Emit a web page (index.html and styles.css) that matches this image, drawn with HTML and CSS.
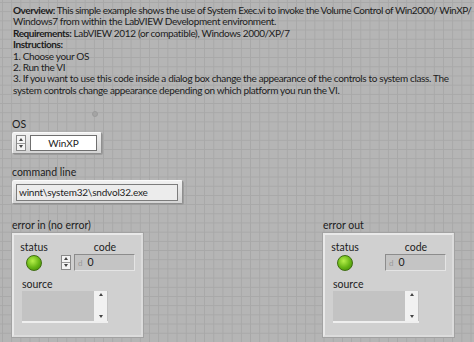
FILE: index.html
```html
<!DOCTYPE html>
<html lang="en">
<head>
  <meta charset="UTF-8" />
  <title>System Exec - Volume Control</title>
  <link rel="stylesheet" href="styles.css">
</head>
<body>
  <div class="panel">
    <p class="intro">
      <span class="tight"><b>Overview:</b> This simple example shows the use of System Exec.vi to invoke the Volume Control of Win2000/ WinXP/</span><br>
      Windows7 from within the LabVIEW Development environment.<br>
      <b>Requirements:</b> LabVIEW 2012 (or compatible), Windows 2000/XP/7<br>
      <b>Instructions:</b><br>
      1. Choose your OS<br>
      2. Run the VI<br>
      3. If you want to use this code inside a dialog box change the appearance of the controls to system class. The<br>
      system controls change appearance depending on which platform you run the VI.
    </p>
    <span class="knob"></span>

    <div class="ctl os">
      <div class="label">OS</div>
      <div class="frame os-frame">
        <div class="spin">
          <span class="up"></span>
          <span class="down"></span>
        </div>
        <div class="display">WinXP</div>
      </div>
    </div>

    <div class="ctl cmd">
      <div class="label">command line</div>
      <div class="frame cmd-frame">
        <div class="field">winnt\system32\sndvol32.exe</div>
      </div>
    </div>

    <div class="errors">
      <div class="ctl">
        <div class="label">error in (no error)</div>
        <div class="cluster">
          <div class="top-row">
            <div class="status">
              <div class="sub">status</div>
              <span class="led"></span>
            </div>
            <div class="code">
              <div class="sub code-label">code</div>
              <div class="code-row">
                <div class="spin small">
                  <span class="up"></span>
                  <span class="down"></span>
                </div>
                <div class="num"><span class="radix">d</span>0</div>
              </div>
            </div>
          </div>
          <div class="sub">source</div>
          <div class="source">
            <div class="scroll"><span class="up"></span><span class="down"></span></div>
          </div>
        </div>
      </div>

      <div class="ctl">
        <div class="label">error out</div>
        <div class="cluster out">
          <div class="top-row">
            <div class="status">
              <div class="sub">status</div>
              <span class="led"></span>
            </div>
            <div class="code">
              <div class="sub code-label">code</div>
              <div class="code-row">
                <div class="num"><span class="radix">d</span>0</div>
              </div>
            </div>
          </div>
          <div class="sub">source</div>
          <div class="source">
            <div class="scroll"><span class="up"></span><span class="down"></span></div>
          </div>
        </div>
      </div>
    </div>
  </div>
</body>
</html>
```

FILE: styles.css
```css
* {
  box-sizing: border-box;
}
body {
  margin: 0;
  font-family: Lato, "Open Sans", sans-serif;
  color: #1c1c1c;
}
.panel {
  position: relative;
  width: 474px;
  height: 342px;
  overflow: hidden;
  padding: 5px 0 0 12px;
  background-color: #b5b5b5;
  background-image:
    linear-gradient(90deg, #a8a8a8 1px, transparent 1px),
    linear-gradient(#a8a8a8 1px, transparent 1px);
  background-size: 9.2px 9.2px;
  background-position: 2px 2px;
}
.intro {
  margin: 0 0 0 1px;
  font-size: 10px;
  letter-spacing: -0.35px;
  line-height: 11.4px;
  white-space: nowrap;
}
.intro b {
  font-weight: 700;
  letter-spacing: -0.45px;
}
.intro .tight {
  letter-spacing: -0.45px;
}
.knob {
  position: absolute;
  left: 92px;
  top: 111px;
  width: 6px;
  height: 6px;
  border-radius: 50%;
  background: #a4a4a4;
  border: 1px solid #9a9a9a;
}
.label {
  font-size: 10.5px;
  line-height: 12px;
  margin-bottom: 2px;
}
.frame {
  display: flex;
  align-items: center;
  background: linear-gradient(#f0f0f0, #d4d4d4);
  border: 1px solid #8f8f8f;
  border-top-color: #fafafa;
  border-left-color: #f4f4f4;
  border-radius: 2px;
  box-shadow: 1px 1px 0 #9c9c9c;
}
.os {
  margin-top: 22px;
}
.os-frame {
  width: 90px;
  height: 22px;
  padding: 0 4px 0 3px;
  gap: 4px;
}
.spin {
  display: flex;
  flex-direction: column;
  width: 10px;
  height: 16px;
  border: 1px solid #8a8a8a;
  background: #f4f4f4;
}
.spin span {
  flex: 1;
  position: relative;
}
.spin .up {
  border-bottom: 1px solid #9a9a9a;
}
.spin span::after,
.scroll span::after {
  content: "";
  position: absolute;
  left: 50%;
  top: 50%;
  margin: -2px 0 0 -2px;
  border-left: 2px solid transparent;
  border-right: 2px solid transparent;
}
.spin .up::after,
.scroll .up::after {
  border-bottom: 3px solid #444;
}
.spin .down::after,
.scroll .down::after {
  border-top: 3px solid #444;
}
.display {
  flex: 1;
  height: 16px;
  background: #fff;
  border: 1px solid #6f6f6f;
  text-align: center;
  font-size: 10px;
  line-height: 14px;
}
.cmd {
  margin-top: 12px;
}
.cmd-frame {
  width: 171px;
  height: 24px;
  padding: 0 4px 0 3px;
}
.field {
  flex: 1;
  height: 17px;
  background: #ececec;
  border: 1px solid #7c7c7c;
  padding-left: 2px;
  font-size: 10px;
  letter-spacing: -0.2px;
  line-height: 15px;
}
.errors {
  display: flex;
  gap: 180px;
  margin-top: 15px;
}
.cluster {
  width: 131px;
  height: 104px;
  padding: 6px 6px 0 8px;
  background: #d0d0d0;
  border: 2px solid #e9e9e9;
  border-right-color: #dcdcdc;
  border-bottom-color: #dcdcdc;
  box-shadow: 0 0 0 1px #a2a2a2;
}
.sub {
  font-size: 10.5px;
  line-height: 12px;
}
.top-row {
  display: flex;
  justify-content: space-between;
  height: 37px;
}
.status {
  display: flex;
  flex-direction: column;
  align-items: center;
  width: 24px;
}
.led {
  width: 16px;
  height: 16px;
  margin-top: 2px;
  border-radius: 50%;
  border: 1px solid #3f6e10;
  background: radial-gradient(circle at 40% 35%, #b6f04a, #66b414 55%, #3e8208);
}
.code {
  display: flex;
  flex-direction: column;
  align-items: flex-end;
}
.code-label {
  width: 60px;
  text-align: center;
  margin-bottom: 1px;
}
.code-row {
  display: flex;
  align-items: center;
  gap: 3px;
}
.spin.small {
  height: 15px;
}
.num {
  width: 61px;
  height: 17px;
  background: #c4c4c4;
  border: 1px solid #8c8c8c;
  border-right-color: #e4e4e4;
  border-bottom-color: #e4e4e4;
  font-size: 10.5px;
  line-height: 15px;
  padding-left: 3px;
}
.radix {
  color: #9a9a9a;
  font-size: 8px;
  margin-right: 5px;
}
.source {
  display: flex;
  justify-content: flex-end;
  width: 86px;
  height: 32px;
  margin-top: 1px;
  background: #c3c3c3;
  border-bottom: 2px solid #efefef;
  padding-right: 1px;
}
.scroll {
  display: flex;
  flex-direction: column;
  justify-content: space-between;
  width: 13px;
  background: #f1f1f1;
}
.scroll span {
  position: relative;
  height: 8px;
}
```
